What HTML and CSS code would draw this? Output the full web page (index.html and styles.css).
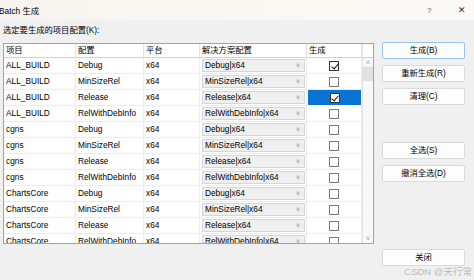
FILE: index.html
```html
<!DOCTYPE html>
<html>
<head>
<meta charset="utf-8">
<link rel="stylesheet" href="styles.css">
</head>
<body>
<div class="window">
  <div class="titlebar">
    <span class="title">Batch 生成</span>
    <span class="tb-help">?</span>
    <span class="tb-close">✕</span>
  </div>
  <div class="label">选定要生成的项目配置(K):</div>
  <div class="main">
    <div class="list">
      <div class="grid">
        <div class="hd">项目</div><div class="hd">配置</div><div class="hd">平台</div><div class="hd">解决方案配置</div><div class="hd">生成</div>

        <div class="c">ALL_BUILD</div><div class="c">Debug</div><div class="c">x64</div><div class="c cb"><span class="combo"><span>Debug|x64</span><i>˅</i></span></div><div class="c ck"><span class="box on"></span></div>
        <div class="c">ALL_BUILD</div><div class="c">MinSizeRel</div><div class="c">x64</div><div class="c cb"><span class="combo"><span>MinSizeRel|x64</span><i>˅</i></span></div><div class="c ck"><span class="box"></span></div>
        <div class="c">ALL_BUILD</div><div class="c">Release</div><div class="c">x64</div><div class="c cb"><span class="combo"><span>Release|x64</span><i>˅</i></span></div><div class="c ck sel"><span class="box on"></span></div>
        <div class="c">ALL_BUILD</div><div class="c">RelWithDebInfo</div><div class="c">x64</div><div class="c cb"><span class="combo"><span>RelWithDebInfo|x64</span><i>˅</i></span></div><div class="c ck"><span class="box"></span></div>
        <div class="c">cgns</div><div class="c">Debug</div><div class="c">x64</div><div class="c cb"><span class="combo"><span>Debug|x64</span><i>˅</i></span></div><div class="c ck"><span class="box"></span></div>
        <div class="c">cgns</div><div class="c">MinSizeRel</div><div class="c">x64</div><div class="c cb"><span class="combo"><span>MinSizeRel|x64</span><i>˅</i></span></div><div class="c ck"><span class="box"></span></div>
        <div class="c">cgns</div><div class="c">Release</div><div class="c">x64</div><div class="c cb"><span class="combo"><span>Release|x64</span><i>˅</i></span></div><div class="c ck"><span class="box"></span></div>
        <div class="c">cgns</div><div class="c">RelWithDebInfo</div><div class="c">x64</div><div class="c cb"><span class="combo"><span>RelWithDebInfo|x64</span><i>˅</i></span></div><div class="c ck"><span class="box"></span></div>
        <div class="c">ChartsCore</div><div class="c">Debug</div><div class="c">x64</div><div class="c cb"><span class="combo"><span>Debug|x64</span><i>˅</i></span></div><div class="c ck"><span class="box"></span></div>
        <div class="c">ChartsCore</div><div class="c">MinSizeRel</div><div class="c">x64</div><div class="c cb"><span class="combo"><span>MinSizeRel|x64</span><i>˅</i></span></div><div class="c ck"><span class="box"></span></div>
        <div class="c">ChartsCore</div><div class="c">Release</div><div class="c">x64</div><div class="c cb"><span class="combo"><span>Release|x64</span><i>˅</i></span></div><div class="c ck"><span class="box"></span></div>
        <div class="c">ChartsCore</div><div class="c">RelWithDebInfo</div><div class="c">x64</div><div class="c cb"><span class="combo"><span>RelWithDebInfo|x64</span><i>˅</i></span></div><div class="c ck"><span class="box"></span></div>
      </div>
      <div class="scroll">
        <div class="sb-head"></div>
        <div class="sb-track">
          <span class="sb-arrow">˄</span>
          <span class="sb-thumb"></span>
          <span class="sb-fill"></span>
          <span class="sb-arrow">˅</span>
        </div>
      </div>
    </div>
    <div class="buttons">
      <div class="btn default">生成(B)</div>
      <div class="btn">重新生成(R)</div>
      <div class="btn">清理(C)</div>
      <div class="btn gap">全选(S)</div>
      <div class="btn">撤消全选(D)</div>
      <div class="btn close">关闭</div>
    </div>
  </div>
  <div class="watermark">CSDN @天行常</div>
</div>
</body>
</html>
```
FILE: styles.css
```css
* { box-sizing: border-box; }
html, body { margin: 0; padding: 0; }
body {
  width: 474px;
  height: 280px;
  overflow: hidden;
  background: #f0f0f0;
  font-family: "Liberation Sans", "Noto Sans CJK SC", sans-serif;
  font-size: 8.3px;
  color: #000;
}
.window { position: relative; width: 474px; height: 280px; }
.titlebar {
  height: 20px;
  display: flex;
  align-items: center;
  background: linear-gradient(90deg, #f7f3ee, #fbf8f4 60%, #fbf9f6);
}
.title { flex: 1; margin-left: -1px; }
.tb-help { width: 31px; color: #555; font-size: 8px; }
.tb-close { width: 16px; color: #333; font-size: 9px; }
.label {
  height: 23px;
  padding: 5px 0 0 3px;
  line-height: 10px;
}
.main { display: flex; align-items: flex-start; }
.list {
  margin-left: 3px;
  width: 371px;
  height: 201px;
  border: 1px solid #a3a3a3;
  background: #fff;
  display: flex;
  overflow: hidden;
}
.grid {
  display: grid;
  grid-template-columns: 72px 68px 56px 107px 55px;
  grid-template-rows: 14px;
  grid-auto-rows: 16px;
  align-content: start;
}
.hd {
  border-right: 1px solid #e3e3e3;
  border-bottom: 1px solid #d2d2d2;
  padding-left: 2px;
  line-height: 12px;
  background: #fff;
}
.c {
  border-right: 1px solid #ececec;
  border-bottom: 1px solid #ececec;
  padding-left: 2px;
  line-height: 14px;
  white-space: nowrap;
  overflow: hidden;
}
.cb { padding: 1px 1px 1px 2px; }
.combo {
  display: flex;
  height: 13px;
  align-items: center;
  justify-content: space-between;
  background: #efefef;
  border: 1px solid #d6d6d6;
  padding: 0 4px 0 2px;
  line-height: 11px;
}
.combo i { font-style: normal; color: #888; font-size: 7px; }
.ck { display: flex; align-items: center; justify-content: center; padding: 0; }
.ck.sel { background: #0a74d6; border: 1px solid #fff; border-top: 0; }
.box {
  width: 10px;
  height: 10px;
  border: 1px solid #7b7b7b;
  background: #fff;
  position: relative;
}
.box.on { border-color: #333; }
.box.on::after {
  content: "";
  position: absolute;
  left: 2.5px;
  top: 0px;
  width: 3px;
  height: 6px;
  border-right: 1.8px solid #111;
  border-bottom: 1.8px solid #111;
  transform: rotate(40deg);
}
.scroll {
  width: 11px;
  display: flex;
  flex-direction: column;
  border-left: 1px solid #e3e3e3;
}
.sb-head { height: 14px; border-bottom: 1px solid #d2d2d2; background: #fff; }
.sb-track {
  flex: 1;
  display: flex;
  flex-direction: column;
  align-items: center;
  background: #f8f8f8;
}
.sb-arrow { height: 9px; line-height: 9px; font-size: 7px; color: #999; }
.sb-thumb { width: 10px; height: 14px; background: #e1e1e1; }
.sb-fill { flex: 1; }
.buttons {
  margin-left: 8px;
  width: 83px;
  display: flex;
  flex-direction: column;
  gap: 6px;
  margin-top: -1px;
}
.btn {
  height: 17px;
  line-height: 15px;
  text-align: center;
  background: #fdfdfd;
  border: 1px solid #dadada;
  border-radius: 2px;
}
.btn.default { border-color: #9cc3ea; }
.btn.gap { margin-top: 31px; }
.btn.close { margin-top: 61px; }
.watermark {
  position: absolute;
  right: 2px;
  bottom: 2px;
  font-size: 9.5px;
  color: rgba(160, 160, 160, 0.7);
}
```
